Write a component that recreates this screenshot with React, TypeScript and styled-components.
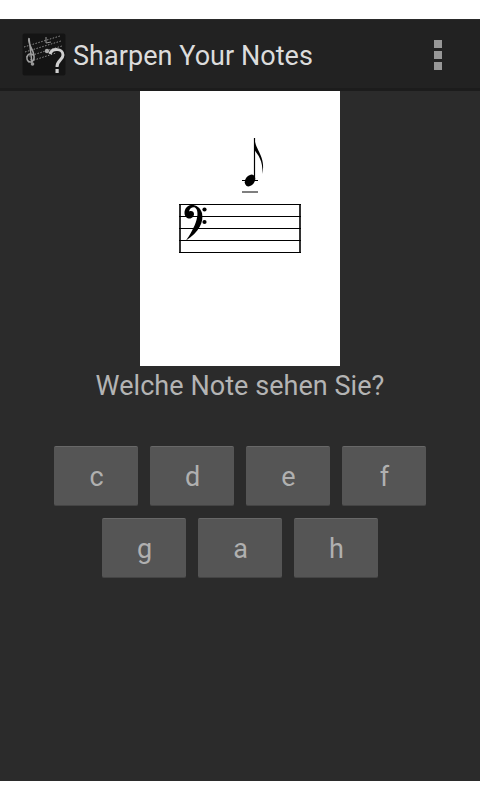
import React from "react";
import styled, { createGlobalStyle } from "styled-components";

const Global = createGlobalStyle`
  html, body { margin: 0; padding: 0; background: #fff; }
  body { font-family: Roboto, "Liberation Sans", sans-serif; }
`;

const Screen = styled.div`
  width: 480px;
  height: 800px;
  display: flex;
  flex-direction: column;
  padding: 19px 0;
  box-sizing: border-box;
  background: #fff;
`;

const AppBar = styled.header`
  height: 72px;
  flex: none;
  box-sizing: border-box;
  display: flex;
  align-items: center;
  padding: 2px 0 0 22px;
  background: #222222;
  border-top: 1px solid #2a2a2a;
  border-bottom: 3px solid #1c1c1c;
`;

const AppIcon = styled.svg`
  width: 44px;
  height: 44px;
  flex: none;
`;

const Title = styled.h1`
  margin: 2px 0 0 7px;
  flex: 1;
  font-size: 27px;
  font-weight: 400;
  letter-spacing: 0.05px;
  color: #dcdcdc;
  line-height: 1;
  white-space: nowrap;
`;

const Overflow = styled.div`
  width: 8px;
  display: flex;
  flex-direction: column;
  gap: 3px;
  margin-right: 38px;
`;

const Dot = styled.span`
  height: 8px;
  background: #979797;
`;

const Content = styled.main`
  flex: 1;
  display: flex;
  flex-direction: column;
  align-items: center;
  background: #2b2b2b;
`;

const Sheet = styled.svg`
  display: block;
  width: 200px;
  height: 275px;
  flex: none;
  background: #fff;
`;

const Question = styled.p`
  margin: 5px 0 0;
  font-size: 27px;
  line-height: 30px;
  letter-spacing: 0.05px;
  color: #b4b4b4;
  white-space: nowrap;
`;

const Keys = styled.div`
  margin-top: 45px;
  display: flex;
  flex-direction: column;
  align-items: center;
  gap: 12px;
`;

const Row = styled.div`
  display: flex;
  gap: 12px;
`;

const Key = styled.button`
  width: 84px;
  height: 60px;
  padding: 3px 0 0 1px;
  box-sizing: border-box;
  border: 0;
  border-top: 1px solid #686868;
  border-bottom: 1px solid #444444;
  border-radius: 2px;
  background: #555555;
  color: #b0b0b0;
  font-family: inherit;
  font-size: 27px;
  line-height: 1;
`;

const rows = [["c", "d", "e", "f"], ["g", "a", "h"]];

export default function App() {
  return (
    <Screen>
      <Global />
      <AppBar>
        <AppIcon viewBox="0 0 44 44" aria-hidden="true">
          <rect x="0.5" y="0.5" width="43" height="42" rx="2" fill="#141414" />
          <g stroke="#8a8a8a" strokeWidth="1" strokeDasharray="1.5 1.5" fill="none">
            <path d="M2 14 L38 3" />
            <path d="M3 19 L39 8" />
            <path d="M4 24 L40 13" />
            <path d="M6 29 L34 20" />
          </g>
          <path d="M7 5 C5 12 13 17 12 25 C11.500 31 4 30 5 24 C6 19 13 20 12 26 C12 28 9 28 9 26 M7 5 L10 30" stroke="#a0a0a0" strokeWidth="1.500" fill="none" />
          <circle cx="10.500" cy="31" r="1.800" fill="#999" />
          <circle cx="25" cy="18" r="2.200" fill="#aaa" />
          <path d="M24 4 L24 10 L29 9" stroke="#999" strokeWidth="1" fill="none" />
          <path d="M28 21 C30 15 41 15 41 22 C41 27 35 27 35 34" stroke="#cfcfcf" strokeWidth="3" fill="none" />
          <rect x="33.500" y="36" width="3.200" height="4" fill="#cfcfcf" />
        </AppIcon>
        <Title>Sharpen Your Notes</Title>
        <Overflow aria-hidden="true">
          <Dot />
          <Dot />
          <Dot />
        </Overflow>
      </AppBar>
      <Content>
        <Sheet viewBox="140 91 200 275" role="img" aria-label="Note">
          <g stroke="#000" fill="none">
            <path d="M179 204.500 H301 M179 216.500 H301 M179 228.500 H301 M179 240.500 H301 M179 252.500 H301" strokeWidth="1.200" />
            <path d="M180 204 V253 M300 204 V253" strokeWidth="1.600" />
            <path d="M242 180.500 H258 M242 192 H258" strokeWidth="1.200" />
            <path d="M254.500 138 V180" strokeWidth="1.200" />
          </g>
          <ellipse cx="250" cy="180.500" rx="4.600" ry="6.400" transform="rotate(35 250 180.500)" fill="#000" />
          <path d="M254.500 138 C255 150 266 156 262.500 174 C263 160 258 155 254.500 150 Z" fill="#000" />
          <path d="M186 240.500 C199 232 204 222 202 213 C200.500 207 195 204.500 191 205 C187 205.500 184.500 209 184.500 213 C184.500 216.500 187 218.500 189.500 218.500 C192.500 218.500 194 216 194 214 C194 211.500 191.500 210.500 189 211.500 C189.500 208 193 206.500 195 207.500 C198 209.500 198 215 196.500 220 C194.500 227 190 235 186 240.500 Z" fill="#000" />
          <circle cx="204.500" cy="209.500" r="2.100" fill="#000" />
          <circle cx="204.500" cy="222" r="2.100" fill="#000" />
        </Sheet>
        <Question>Welche Note sehen Sie?</Question>
        <Keys>
          {rows.map((row) => (
            <Row key={row[0]}>
              {row.map((note) => (
                <Key key={note}>{note}</Key>
              ))}
            </Row>
          ))}
        </Keys>
      </Content>
    </Screen>
  );
}
